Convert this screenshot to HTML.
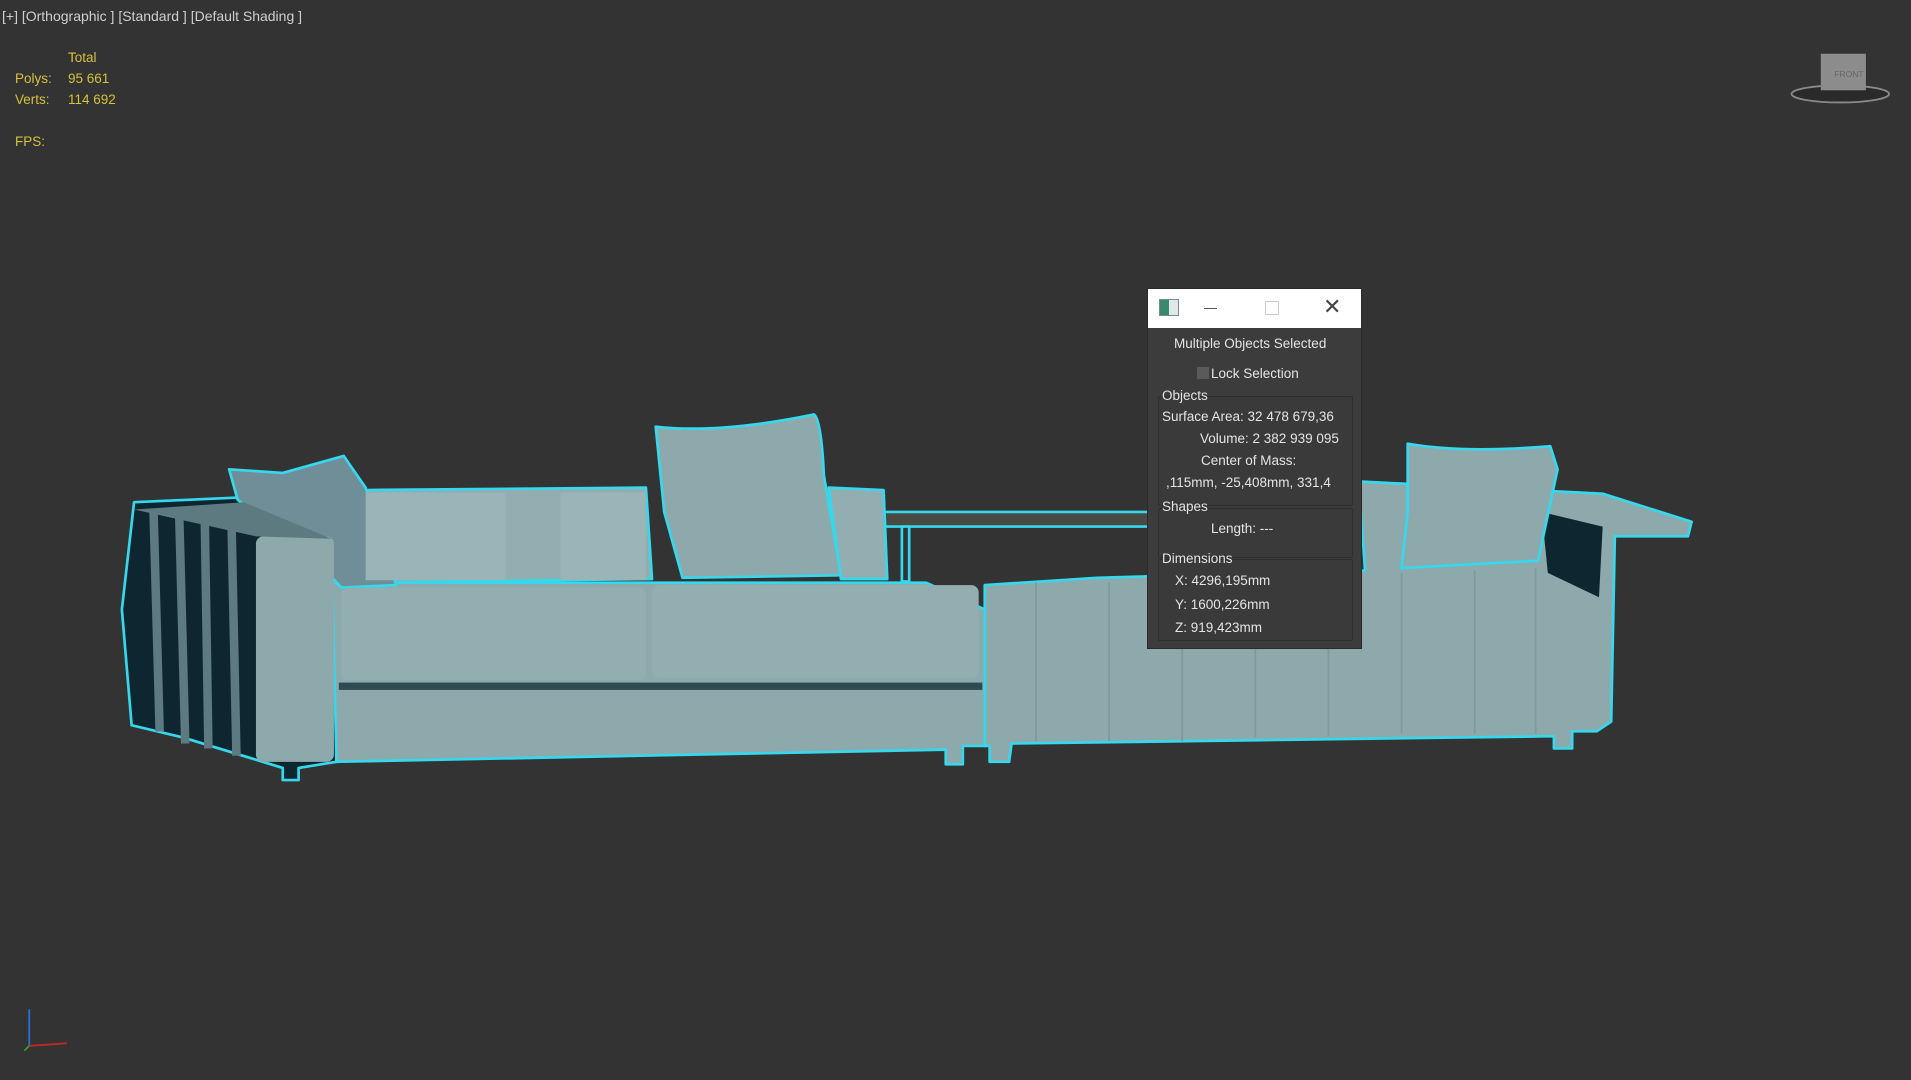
<!DOCTYPE html>
<html><head><meta charset="utf-8"><style>
html,body{margin:0;padding:0;width:1911px;height:1080px;overflow:hidden;background:#333333;font-family:"Liberation Sans",sans-serif}
#v{position:absolute;left:0;top:0}
.t{position:absolute;font-size:14px;white-space:pre}
.y{color:#d4c23a;font-size:13.5px}
#dlg{position:absolute;left:1148px;top:289px;width:213px;height:359px;background:#3c3c3c;box-shadow:0 0 0 1px #2a2a2a}
#tb{height:39px;background:#fff;position:relative}
#dlg .l{position:absolute;color:#e4e4e4;font-size:13.5px;white-space:nowrap}
.grp{position:absolute;left:10px;width:193px;border:1px solid #2e2e2e;border-radius:2px;background:#3a3a3a}
</style></head><body>
<svg id="v" width="1911" height="1080" viewBox="0 0 1568 886">
<g stroke="#35d8ec" stroke-width="2.2" stroke-linejoin="round">
<rect x="725" y="420" width="225" height="12" fill="#4a4a45"/>
<rect x="740" y="432" width="6" height="45" fill="#333"/>
<path d="M1115 395 L1315 405 L1388 428 L1385 440 L1325 440 L1322 592 L1310 600 L1290 600 L1290 614 L1275 614 L1275 604 L830 610 L828 625 L812 625 L812 612 L808 612 L808 480 L900 474 L1120 468 Z" fill="#8ea9ac"/>
<path d="M1265 420 L1315 432 L1312 490 L1270 470 Z" fill="#0e2630" stroke="none"/>
<path d="M300 402 L530 400 L535 475 L300 478 Z" fill="#93aeb1"/>
<path d="M680 400 L725 402 L728 475 L690 475 Z" fill="#93aeb1"/>
<path d="M272 478 L760 478 L808 500 L808 612 L790 612 L790 627 L776 627 L776 615 L275 625 L272 560 Z" fill="#8ea9ac"/>
<path d="M110 412 L200 408 L272 440 L276 625 L245 630 L245 640 L232 640 L232 630 L150 605 L108 595 L100 500 Z" fill="#0e2630"/>
<path d="M188 385 L232 388 L282 374 L300 400 L325 480 L280 482 L255 455 L195 410 Z" fill="#6f8e98"/>
<path d="M538 350 Q590 356 668 340 Q674 345 676 390 L690 472 L560 474 L545 420 Z" fill="#8ea9ac"/>
<path d="M1155 364 Q1200 372 1272 366 L1278 385 L1262 460 L1150 466 L1155 420 Z" fill="#8ea9ac"/>
</g>
<g stroke="none">
<rect x="210" y="440" width="64" height="185" rx="6" fill="#8ea9ac"/>
<path d="M110 418 L200 412 L272 442 L210 440 Z" fill="#5d7a80"/>
<path d="M126 420 L131 600 M147 420 L152 610 M168 425 L171 614 M190 430 L194 620" stroke="#5d7a80" stroke-width="7"/>
<rect x="280" y="482" width="250" height="76" rx="6" fill="#93aeb1"/>
<rect x="535" y="480" width="268" height="76" rx="6" fill="#93aeb1"/>
<rect x="278" y="560" width="528" height="6" fill="#2e4a52"/>
<path d="M970 478v130M1030 475v130M1090 472v132M1150 470v132M1210 468v134M1260 466v136M850 478v130M910 478v130" stroke="#7f9a9d" stroke-width="1.5"/>
<rect x="300" y="404" width="115" height="72" fill="#9ab4b7"/>
<rect x="460" y="404" width="70" height="72" fill="#9ab4b7"/>
</g>
<path d="M24 858 L24 828" stroke="#2a6fd6" stroke-width="1.5"/>
<path d="M24 858 L55 856" stroke="#c02828" stroke-width="1.5"/>
<path d="M24 858 L20 862" stroke="#2aa02a" stroke-width="1.5"/>
<ellipse cx="1510" cy="77" rx="40" ry="7" fill="#2a2a2a" stroke="#8a8a8a" stroke-width="1.5"/>
<rect x="1494" y="44" width="37" height="30" fill="#8c8c8c"/>
<text x="1505" y="63" font-size="7" fill="#666" font-family="Liberation Sans">FRONT</text>
</svg>
<div class="t" style="left:2px;top:8px;color:#cfcfcf">[+] [Orthographic ] [Standard ] [Default Shading ]</div>
<div class="t y" style="left:68px;top:50px">Total</div>
<div class="t y" style="left:15px;top:71px">Polys:</div><div class="t y" style="left:68px;top:71px">95 661</div>
<div class="t y" style="left:15px;top:92px">Verts:</div><div class="t y" style="left:68px;top:92px">114 692</div>
<div class="t y" style="left:15px;top:134px">FPS:</div>
<div id="dlg">
<div id="tb">
<div style="position:absolute;left:11px;top:10px;width:18px;height:15px;border:1px solid #7a8a90;background:linear-gradient(90deg,#3a8a6a 50%,#e0e8ec 50%)"></div>
<div style="position:absolute;left:56px;top:19px;width:13px;height:1px;background:#555"></div>
<div style="position:absolute;left:117px;top:12px;width:12px;height:12px;border:1px solid #ccc"></div>
<div style="position:absolute;left:175px;top:7px;font-size:22px;color:#444;line-height:22px">✕</div>
</div>
<div class="l" style="left:26px;top:47px">Multiple Objects Selected</div>
<div style="position:absolute;left:49px;top:78px;width:12px;height:12px;background:#5a5a5a"></div>
<div class="l" style="left:63px;top:77px">Lock Selection</div>
<div class="grp" style="top:107px;height:108px"></div>
<div class="l" style="left:14px;top:99px">Objects</div>
<div class="l" style="left:14px;top:120px;width:185px;overflow:hidden">Surface Area:  32 478 679,36</div>
<div class="l" style="left:52px;top:142px;width:147px;overflow:hidden">Volume:  2 382 939 095</div>
<div class="l" style="left:53px;top:164px">Center of Mass:</div>
<div class="l" style="left:18px;top:186px;width:178px;overflow:hidden">,115mm, -25,408mm, 331,4</div>
<div class="grp" style="top:219px;height:48px"></div>
<div class="l" style="left:14px;top:210px">Shapes</div>
<div class="l" style="left:63px;top:232px">Length:  ---</div>
<div class="grp" style="top:270px;height:80px"></div>
<div class="l" style="left:14px;top:262px">Dimensions</div>
<div class="l" style="left:27px;top:284px">X:   4296,195mm</div>
<div class="l" style="left:27px;top:308px">Y:   1600,226mm</div>
<div class="l" style="left:27px;top:331px">Z:   919,423mm</div>
</div>
</body></html>
